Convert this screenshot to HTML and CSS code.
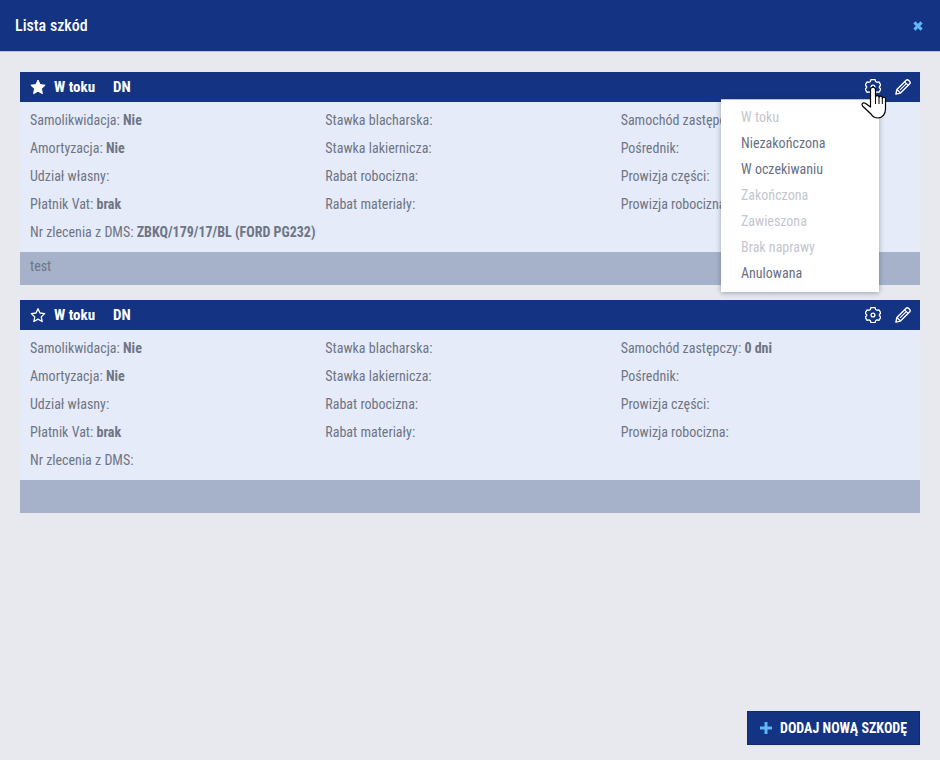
FILE: index.html
```html
<!DOCTYPE html>
<html lang="pl">
<head>
<meta charset="utf-8">
<title>Lista szkód</title>
<link rel="stylesheet" href="styles.css">
</head>
<body>
<svg class="defs" width="0" height="0">
  <defs>
    <symbol id="gear" viewBox="0 0 16 16">
      <path d="M5.900 1h4.200l.5 1.900 1.300.8 2-.5 2 3.300-1.500 1.400v1.200l1.500 1.400-2 3.300-2-.5-1.300.8-.5 1.900H5.900l-.5-1.900-1.300-.8-2 .5-2-3.300 1.500-1.400V7.900L.1 6.500l2-3.300 2 .5 1.300-.8z" transform="translate(0 -.4)" fill="none" stroke="#fff" stroke-width="1.300" stroke-linejoin="round"/>
      <circle cx="8" cy="8" r="1.900" fill="none" stroke="#fff" stroke-width="1.300"/>
    </symbol>
    <symbol id="pencil" viewBox="0 0 16 16">
      <path d="M.9 15.100l1-4.600L10.900 1.500a2 2 0 0 1 2.800 0l.8.8a2 2 0 0 1 0 2.800L5.500 14.100z" fill="none" stroke="#fff" stroke-width="1.400" stroke-linejoin="round"/>
      <path d="M2 10.500l3.500 3.500M9.600 2.800l3.600 3.600M5 10.900l6.300-6.300" fill="none" stroke="#fff" stroke-width="1.200"/>
    </symbol>
  </defs>
</svg>
<header class="topbar">
  <h1 class="topbar-title">Lista szkód</h1>
  <svg class="close-icon" viewBox="0 0 10 10" width="10" height="10"><path d="M1.400 1.400l7.200 7.200M8.600 1.400l-7.200 7.200" stroke="#5db8f5" stroke-width="3"/></svg>
</header>
<main class="content">
  <section class="card">
    <div class="card-head">
      <svg class="star" viewBox="0 0 24 24" width="16" height="16"><path d="M12 1.500l3.200 6.900 7.500.9-5.500 5.200 1.400 7.500-6.600-3.700-6.600 3.700 1.400-7.500L1.300 9.300l7.500-.9z" fill="#fff" stroke="#fff" stroke-width="1.500" stroke-linejoin="round"/></svg>
      <span class="head-label">W toku</span>
      <span class="head-label">DN</span>
      <span class="head-actions">
        <svg class="act" width="16" height="16"><use href="#gear"/></svg>
        <svg class="act" width="16" height="16"><use href="#pencil"/></svg>
      </span>
      <svg class="cursor" viewBox="0 0 27 33" width="27" height="33"><path d="M10.500 3.500c0-3 5-3 5 0V11c0-1.800 3.500-1.800 3.500 0v.5c0-1.800 3.300-1.800 3.300 0v1c0-1.700 3.200-1.700 3.200.3V23c0 5-3 9-7.500 9-4 0-5.500-1.500-7-4L2.500 20c-1.500-2 .5-4 2.800-2.800l5.200 3.800z" fill="#fff" stroke="#000" stroke-width="1.200" stroke-linejoin="round"/><path d="M15.500 11v7M19 11.500v6.500M22.300 12.500V18" stroke="#000" stroke-width="1"/></svg>
      <ul class="menu">
        <li class="menu-item off">W toku</li>
        <li class="menu-item">Niezakończona</li>
        <li class="menu-item">W oczekiwaniu</li>
        <li class="menu-item off">Zakończona</li>
        <li class="menu-item off">Zawieszona</li>
        <li class="menu-item off">Brak naprawy</li>
        <li class="menu-item">Anulowana</li>
      </ul>
    </div>
    <div class="card-body">
      <div class="cell">Samolikwidacja: <b>Nie</b></div>
      <div class="cell">Stawka blacharska:</div>
      <div class="cell">Samochód zastępczy: <b>0 dni</b></div>
      <div class="cell">Amortyzacja: <b>Nie</b></div>
      <div class="cell">Stawka lakiernicza:</div>
      <div class="cell">Pośrednik:</div>
      <div class="cell">Udział własny:</div>
      <div class="cell">Rabat robocizna:</div>
      <div class="cell">Prowizja części:</div>
      <div class="cell">Płatnik Vat: <b>brak</b></div>
      <div class="cell">Rabat materiały:</div>
      <div class="cell">Prowizja robocizna:</div>
      <div class="cell wide">Nr zlecenia z DMS: <b>ZBKQ/179/17/BL (FORD PG232)</b></div>
    </div>
    <div class="card-note">test</div>
  </section>
  <section class="card">
    <div class="card-head">
      <svg class="star" viewBox="0 0 24 24" width="16" height="16"><path d="M12 2.500l3 6.500 7 .9-5.100 4.900 1.300 7-6.200-3.500-6.200 3.500 1.300-7L2 9.900 9 9z" fill="none" stroke="#fff" stroke-width="2" stroke-linejoin="round"/></svg>
      <span class="head-label">W toku</span>
      <span class="head-label">DN</span>
      <span class="head-actions">
        <svg class="act" width="16" height="16"><use href="#gear"/></svg>
        <svg class="act" width="16" height="16"><use href="#pencil"/></svg>
      </span>
    </div>
    <div class="card-body">
      <div class="cell">Samolikwidacja: <b>Nie</b></div>
      <div class="cell">Stawka blacharska:</div>
      <div class="cell">Samochód zastępczy: <b>0 dni</b></div>
      <div class="cell">Amortyzacja: <b>Nie</b></div>
      <div class="cell">Stawka lakiernicza:</div>
      <div class="cell">Pośrednik:</div>
      <div class="cell">Udział własny:</div>
      <div class="cell">Rabat robocizna:</div>
      <div class="cell">Prowizja części:</div>
      <div class="cell">Płatnik Vat: <b>brak</b></div>
      <div class="cell">Rabat materiały:</div>
      <div class="cell">Prowizja robocizna:</div>
      <div class="cell wide">Nr zlecenia z DMS:</div>
    </div>
    <div class="card-note"></div>
  </section>
</main>
<button class="add-btn" type="button">
  <svg viewBox="0 0 12 12" width="12" height="12"><path d="M6 0v12M0 6h12" stroke="#5db8f5" stroke-width="3"/></svg>
  <span>DODAJ NOWĄ SZKODĘ</span>
</button>
</body>
</html>
```

FILE: styles.css
```css
* { box-sizing: border-box; }
html, body { height: 100%; }
body {
  margin: 0;
  background: #e7e9ef;
  font-family: Roboto, "Noto Sans", sans-serif;
  font-stretch: 75%;
  font-size: 14px;
  color: #6f7585;
  display: flex;
  flex-direction: column;
  overflow: hidden;
}
.defs { position: absolute; }
.topbar {
  height: 52px;
  flex: none;
  background: #143382;
  border-bottom: 1px solid #b9c0d0;
  display: flex;
  align-items: center;
  justify-content: space-between;
  padding: 0 17px 0 15px;
}
.topbar-title {
  margin: 0;
  font-size: 16px;
  font-weight: 500;
  color: #fff;
}
.content {
  flex: 1;
  padding: 20px 20px 0;
  display: flex;
  flex-direction: column;
  gap: 15px;
}
.card { display: flex; flex-direction: column; }
.card-head {
  position: relative;
  height: 30px;
  background: #143382;
  display: flex;
  align-items: center;
  padding: 0 9px 0 9.5px;
  color: #fff;
}
.star { margin-right: 8.5px; }
.head-label {
  font-weight: 700;
  font-size: 15px;
  margin-right: 18px;
}
.head-actions {
  margin-left: auto;
  display: flex;
  align-items: center;
  gap: 14px;
}
.act { display: block; }
.cursor { position: absolute; left: 840px; top: 14px; z-index: 3; }
.menu {
  position: absolute;
  left: 701px;
  top: 27px;
  z-index: 2;
  width: 158px;
  margin: 0;
  padding: 4px 0 6px;
  list-style: none;
  background: #fff;
  border-top: 1px solid #b9c0d0;
  box-shadow: 0 1px 5px rgba(40, 50, 80, .4);
}
.menu-item {
  height: 26px;
  line-height: 26px;
  padding-left: 20px;
  color: #6a7082;
}
.menu-item.off { color: #c4c6d0; }
.card-body {
  height: 150px;
  background: #e5ebf8;
  padding: 4px 4px 6px 10px;
  display: grid;
  grid-template-columns: repeat(3, 1fr);
  grid-auto-rows: 28px;
}
.cell { line-height: 28px; white-space: nowrap; }
.cell b { font-weight: 700; }
.cell.wide { grid-column: 1 / -1; }
.card-note {
  height: 33px;
  background: #a6b1ca;
  padding: 0 10px;
  line-height: 29px;
}
.add-btn {
  position: absolute;
  left: 747px;
  top: 711px;
  width: 173px;
  height: 34px;
  border: 1px solid #0f2a70;
  background: #143382;
  color: #fff;
  font-family: inherit;
  font-stretch: 75%;
  font-weight: 700;
  font-size: 14px;
  display: flex;
  align-items: center;
  gap: 8px;
  padding: 0 0 0 12px;
}
```
